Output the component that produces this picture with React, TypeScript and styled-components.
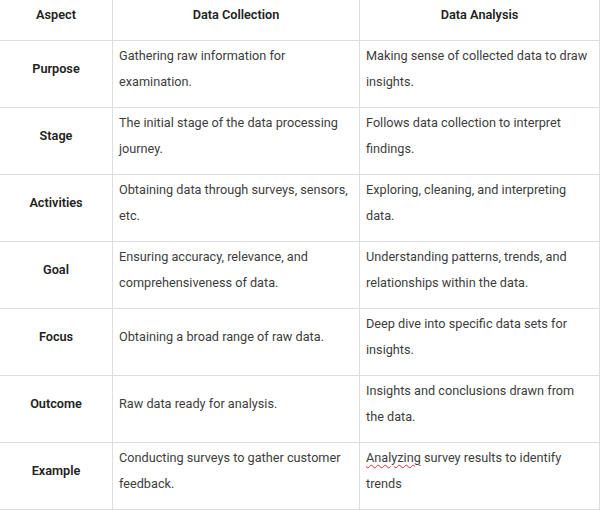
import React from "react";
import styled, { createGlobalStyle } from "styled-components";

const Global = createGlobalStyle`
  html, body { margin: 0; padding: 0; background: #ffffff; }
  body { font-family: Roboto, "Liberation Sans", Arial, sans-serif; }
`;

const Grid = styled.div`
  display: grid;
  grid-template-columns: 113px 247px 240px;
  width: 600px;
  font-family: Roboto, "Liberation Sans", Arial, sans-serif;
  font-size: 12.7px;
  line-height: 26px;
  color: #3d3d3d;
`;

const Cell = styled.div<{ $head?: boolean; $center?: boolean }>`
  display: flex;
  align-items: center;
  justify-content: ${(p) => (p.$center ? "center" : "flex-start")};
  text-align: ${(p) => (p.$center ? "center" : "left")};
  box-sizing: border-box;
  height: ${(p) => (p.$head ? "41px" : "67px")};
  padding: 2px 6px 12px 6px;
  border-right: 1px solid #dedede;
  border-bottom: 1px solid #dedede;
  font-weight: ${(p) => (p.$head || p.$center ? 600 : 400)};
  color: ${(p) => (p.$head || p.$center ? "#222222" : "#3d3d3d")};
`;

const Text = styled.span`
  display: block;
`;

const Misspelled = styled.span`
  text-decoration: underline wavy #e03030;
  text-decoration-thickness: 1px;
  text-underline-offset: 2px;
`;

const rows: [string, React.ReactNode, React.ReactNode][] = [
  ["Purpose", "Gathering raw information for examination.", "Making sense of collected data to draw insights."],
  ["Stage", "The initial stage of the data processing journey.", "Follows data collection to interpret findings."],
  ["Activities", "Obtaining data through surveys, sensors, etc.", "Exploring, cleaning, and interpreting data."],
  ["Goal", "Ensuring accuracy, relevance, and comprehensiveness of data.", "Understanding patterns, trends, and relationships within the data."],
  ["Focus", "Obtaining a broad range of raw data.", "Deep dive into specific data sets for insights."],
  ["Outcome", "Raw data ready for analysis.", "Insights and conclusions drawn from the data."],
  [
    "Example",
    "Conducting surveys to gather customer feedback.",
    <>
      <Misspelled>Analyzing</Misspelled> survey results to identify trends
    </>,
  ],
];

export default function App() {
  return (
    <>
      <Global />
      <Grid>
        <Cell $head $center>Aspect</Cell>
        <Cell $head $center>Data Collection</Cell>
        <Cell $head $center>Data Analysis</Cell>
        {rows.map(([a, b, c]) => (
          <React.Fragment key={a}>
            <Cell $center>{a}</Cell>
            <Cell>
              <Text>{b}</Text>
            </Cell>
            <Cell>
              <Text>{c}</Text>
            </Cell>
          </React.Fragment>
        ))}
      </Grid>
    </>
  );
}
